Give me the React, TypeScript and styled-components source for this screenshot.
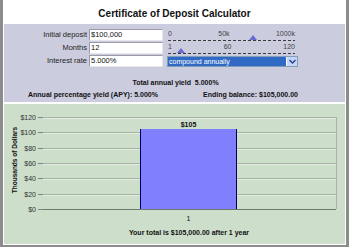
import styled, { createGlobalStyle } from "styled-components";

const GlobalStyle = createGlobalStyle`
  html, body {
    margin: 0;
    padding: 0;
    background: #ffffff;
  }
  body {
    font-family: "Liberation Sans", Arial, sans-serif;
    color: #222;
  }
`;

const gridValues = [0, 20, 40, 60, 80, 100, 120];
const plotTop = 117;
const plotBottom = 209;
const plotLeft = 43;
const plotRight = 336;
const yFor = (v: number) => plotBottom - (v / 120) * (plotBottom - plotTop);

export default function App() {
    return (
        <>
            <GlobalStyle/>
            <Frame>
                <Title>Certificate of Deposit Calculator</Title>

                <InputPanel>
                    <Row>
                        <Label>Initial deposit</Label>
                        <TextBox>$100,000</TextBox>
                        <Slider labels={["0", "50k", "1000k"]} thumb={85}/>
                    </Row>
                    <Row>
                        <Label>Months</Label>
                        <TextBox>12</TextBox>
                        <Slider labels={["1", "60", "120"]} thumb={13}/>
                    </Row>
                    <Row>
                        <Label>Interest rate</Label>
                        <TextBox>5.000%</TextBox>
                        <Select>
                            <SelectValue>compound annually</SelectValue>
                            <DropButton>
                                <svg width="7" height="5" viewBox="0 0 7 5">
                                    <path d="M0.5 1 L3.5 4 L6.5 1" fill="none" stroke="#2a3f8f" strokeWidth="1.4"/>
                                </svg>
                            </DropButton>
                        </Select>
                    </Row>

                    <Summary>
                        <SummaryLine>Total annual yield&nbsp; 5.000%</SummaryLine>
                        <SummarySplit>
                            <span>Annual percentage yield (APY): 5.000%</span>
                            <span>Ending balance: $105,000.00</span>
                        </SummarySplit>
                    </Summary>
                </InputPanel>

                <ChartPanel>
                    <ChartSvg width="341" height="122" viewBox="0 0 341 122">
                        <g transform="translate(-4,-104)" shapeRendering="crispEdges">
                            <text x="14" y="160" transform="rotate(-90 14 160)" textAnchor="middle"
                                  dominantBaseline="central" fontSize="6.5" fontWeight="bold" fill="#111">
                                Thousands of Dollars
                            </text>
                            {gridValues.map((v) => {
                                const y = Math.round(yFor(v)) + 0.5;
                                return (
                                    <g key={v}>
                                        <line x1={plotLeft} x2={plotRight} y1={y} y2={y}
                                              stroke={v === 0 ? "#6f7a6d" : "#a7b3a5"}/>
                                        {v !== 0 && (
                                            <line x1={plotLeft} x2={plotRight} y1={y + 1} y2={y + 1} stroke="#e2ebe0"/>
                                        )}
                                        <line x1={38} x2={plotLeft} y1={y} y2={y} stroke="#7f8a7d"/>
                                        <text x="36" y={y} textAnchor="end" dominantBaseline="central"
                                              fontSize="7" fill="#333">${v}</text>
                                    </g>
                                );
                            })}
                            <line x1={plotRight + 0.5} x2={plotRight + 0.5} y1={plotTop} y2={plotBottom}
                                  stroke="#a7b3a5"/>
                            <rect x="140" y={yFor(105)} width="97" height={plotBottom - yFor(105)} fill="#8080ff"/>
                            <line x1="140.5" x2="140.5" y1={yFor(105)} y2={plotBottom} stroke="#00005a"/>
                            <line x1="236.5" x2="236.5" y1={yFor(105)} y2={plotBottom} stroke="#00005a"/>
                            <text x="188.5" y="124" textAnchor="middle" dominantBaseline="central"
                                  fontSize="7" fontWeight="bold" fill="#111">$105</text>
                            <text x="188.5" y="218" textAnchor="middle" dominantBaseline="central"
                                  fontSize="7" fill="#111">1</text>
                        </g>
                    </ChartSvg>
                    <Caption>Your total is $105,000.00 after 1 year</Caption>
                </ChartPanel>
            </Frame>
        </>
    );
}

type SliderProps = {
    labels: string[];
    thumb: number;
};

const Slider = ({labels, thumb}: SliderProps) => {
    return (
        <SliderWrap>
            <SliderLabels>
                {labels.map((l) => (
                    <span key={l}>{l}</span>
                ))}
            </SliderLabels>
            <Track/>
            <Thumb style={{left: thumb - 4}}/>
        </SliderWrap>
    );
};

const Frame = styled.div`
    width: 349px;
    height: 247px;
    box-sizing: border-box;
    border-left: 3px solid #8c8c8c;
    border-right: 3px solid #8c8c8c;
    border-bottom: 2px solid #8c8c8c;
    padding: 0 1px 1px;
    display: flex;
    flex-direction: column;
    background: #fff;
`

const Title = styled.div`
    height: 24px;
    box-sizing: border-box;
    padding-top: 4px;
    line-height: 20px;
    text-align: center;
    font-size: 10px;
    font-weight: bold;
    color: #111;
`

const InputPanel = styled.div`
    height: 78px;
    box-sizing: border-box;
    padding-top: 5px;
    background: #ccccdf;
`

const Row = styled.div`
    display: flex;
    height: 12px;
    margin-bottom: 1px;
`

const Label = styled.div`
    width: 83px;
    margin-right: 2px;
    text-align: right;
    font-size: 7.5px;
    line-height: 12px;
    color: #222;
`

const TextBox = styled.div`
    width: 74px;
    height: 12px;
    box-sizing: border-box;
    background: #fff;
    border: 1px solid;
    border-color: #9a9aa8 #e6e6ee #e6e6ee #9a9aa8;
    padding-left: 1px;
    font-size: 7.5px;
    line-height: 10px;
    color: #111;
`

const SliderWrap = styled.div`
    position: relative;
    width: 127px;
    margin-left: 5px;
    height: 12px;
`

const SliderLabels = styled.div`
    display: flex;
    justify-content: space-between;
    height: 10px;
    line-height: 9px;
    font-size: 7px;
    color: #444;
`

const Track = styled.div`
    height: 1px;
    margin-top: 1px;
    background: repeating-linear-gradient(to right, #3a3a3a 0 3px, transparent 3px 5px);
`

const Thumb = styled.div`
    position: absolute;
    top: 6px;
    width: 0;
    height: 0;
    border-left: 4px solid transparent;
    border-right: 4px solid transparent;
    border-bottom: 5px solid #6a6ad2;
`

const Select = styled.div`
    display: flex;
    width: 131px;
    height: 11px;
    margin: 1px 0 0 4px;
    box-sizing: border-box;
    border: 1px solid #7f9db9;
    background: #fff;
`

const SelectValue = styled.div`
    flex: 1;
    background: #316ac5;
    color: #fff;
    font-size: 7px;
    line-height: 9px;
    padding-left: 1px;
`

const DropButton = styled.div`
    width: 10px;
    display: flex;
    align-items: center;
    justify-content: center;
    background: #c6d6f6;
    border-left: 1px solid #fff;
`

const Summary = styled.div`
    margin-top: 11px;
    display: flex;
    flex-direction: column;
    gap: 2px;
    font-size: 7px;
    font-weight: bold;
    line-height: 10px;
    color: #111;
`

const SummaryLine = styled.div`
    text-align: center;
    padding-left: 2px;
`

const SummarySplit = styled.div`
    display: grid;
    grid-template-columns: 175px auto;
    padding-left: 24px;
`

const ChartPanel = styled.div`
    margin-top: 2px;
    flex: 1;
    background: #cddecb;
    display: flex;
    flex-direction: column;
`

const ChartSvg = styled.svg`
    display: block;
    font-family: "Liberation Sans", Arial, sans-serif;
`

const Caption = styled.div`
    margin-left: 38px;
    width: 294px;
    margin-top: 2px;
    text-align: center;
    font-size: 7px;
    font-weight: bold;
    line-height: 10px;
    color: #111;
`
